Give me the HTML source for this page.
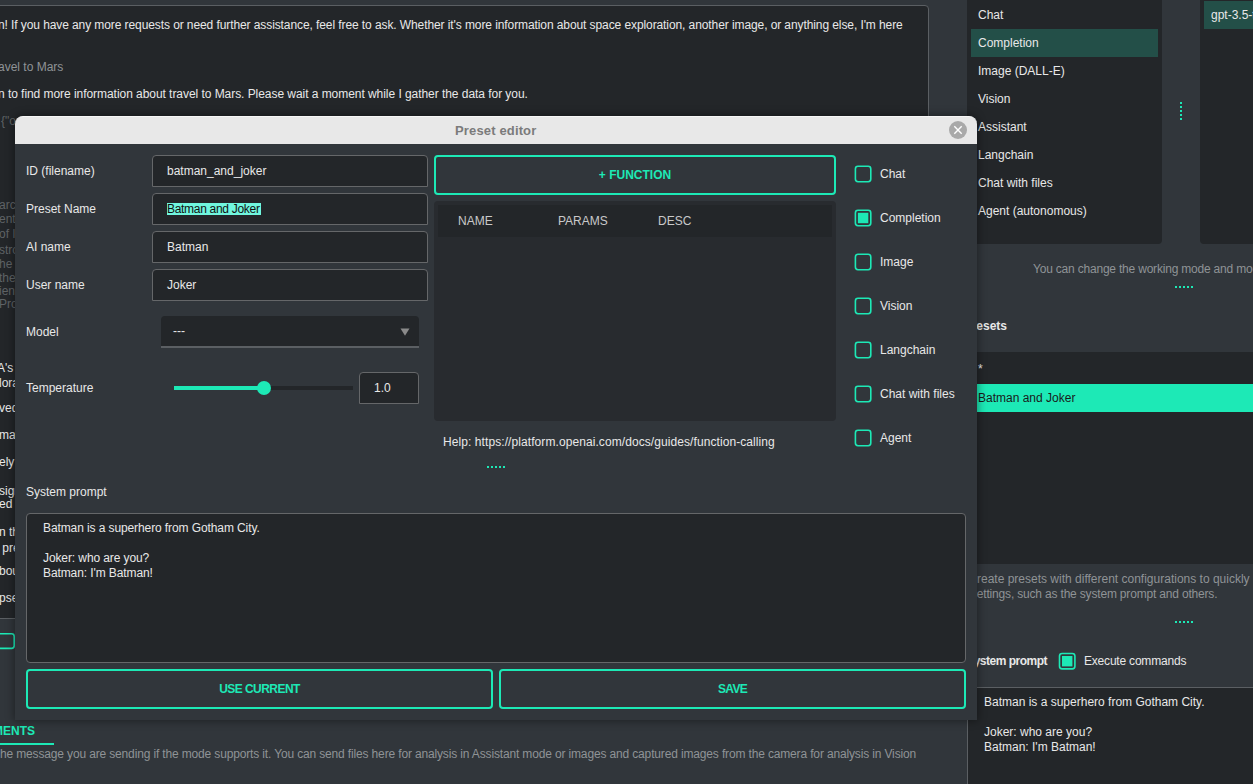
<!DOCTYPE html>
<html><head><meta charset="utf-8">
<style>
*{box-sizing:border-box;margin:0;padding:0}
html,body{width:1253px;height:784px;overflow:hidden;background:#31363b}
body{position:relative;font-family:"Liberation Sans",sans-serif;font-size:12px;color:#e8e8e8}
.a{position:absolute}
.t{position:absolute;white-space:pre;line-height:16px;height:16px}
.g{color:#8f9396}
.dark{background:#232629}
.dotsh{position:absolute;height:2px;background:repeating-linear-gradient(90deg,#1de9b6 0 2px,transparent 2px 4px)}
.dotsv{position:absolute;width:2px;background:repeating-linear-gradient(180deg,#1de9b6 0 2px,transparent 2px 4px)}
.inp{position:absolute;background:#232629;border:1px solid #656769;border-radius:4px 4px 0 0}
.btn{position:absolute;border:2px solid #1de9b6;border-radius:4px;color:#1de9b6;font-weight:bold;text-align:center}
.cb{position:absolute;width:17px;height:17px;border:2px solid #1de9b6;border-radius:3px}
.cb.on::after{content:"";position:absolute;left:2px;top:2px;width:9px;height:9px;background:#1de9b6}
</style></head><body>

<!-- ===== background: chat output ===== -->
<div class="a dark" style="left:-10px;top:5px;width:939px;height:614px;border:1px solid #5b5f63;border-radius:4px"></div>
<div class="t" style="left:-2px;top:17px;letter-spacing:-0.09px">n! If you have any more requests or need further assistance, feel free to ask. Whether it's more information about space exploration, another image, or anything else, I'm here</div>
<div class="t g" style="left:-2px;top:59px">avel to Mars</div>
<div class="t" style="left:-2px;top:86px;letter-spacing:-0.05px">n to find more information about travel to Mars. Please wait a moment while I gather the data for you.</div>
<div class="t" style="left:1px;top:113px;color:#5f6366">{"o</div>

<!-- left strip partial texts -->
<div class="a" style="left:0;top:180px;width:15px;height:440px;overflow:hidden;white-space:pre">
<div class="t" style="left:-1px;top:17px;color:#5f6366">arc</div>
<div class="t" style="left:-1px;top:31px;color:#5f6366">ent</div>
<div class="t" style="left:-1px;top:46px;color:#5f6366">of I</div>
<div class="t" style="left:-1px;top:62px;color:#5f6366">stro</div>
<div class="t" style="left:-1px;top:76px;color:#5f6366">he</div>
<div class="t" style="left:-1px;top:90px;color:#5f6366">the</div>
<div class="t" style="left:-1px;top:103px;color:#5f6366">ien</div>
<div class="t" style="left:-1px;top:116px;color:#5f6366">Pro</div>
<div class="t" style="left:-3px;top:180px">A's I</div>
<div class="t" style="left:-1px;top:195px">lora</div>
<div class="t" style="left:-1px;top:220px">ved</div>
<div class="t" style="left:-1px;top:247px">man</div>
<div class="t" style="left:-1px;top:274px">ely</div>
<div class="t" style="left:-1px;top:303px">sign</div>
<div class="t" style="left:-1px;top:316px">ed</div>
<div class="t" style="left:-1px;top:344px">n th</div>
<div class="t" style="left:-1px;top:360px"> pre</div>
<div class="t" style="left:-1px;top:383px">bou</div>
<div class="t" style="left:-1px;top:410px">pse</div>
</div>
<svg class="a" style="left:0;top:630px" width="20" height="22"><rect x="-10" y="3.8" width="24.2" height="14.6" rx="2.6" fill="none" stroke="#1de9b6" stroke-width="1.6"/></svg>

<!-- attachments tab -->
<div class="t" style="left:-7px;top:723px;color:#1de9b6;font-weight:bold">MENTS</div>
<div class="a" style="left:0;top:743px;width:54px;height:2px;background:#1de9b6"></div>
<div class="t g" style="left:0px;top:746px;letter-spacing:-0.15px">he message you are sending if the mode supports it. You can send files here for analysis in Assistant mode or images and captured images from the camera for analysis in Vision</div>

<!-- ===== right panel ===== -->
<div class="a dark" style="left:967px;top:-6px;width:195px;height:250px;border-radius:4px"></div>
<div class="a" style="left:971px;top:29px;width:187px;height:28px;background:#234f48"></div>
<div class="t" style="left:978px;top:7px">Chat</div>
<div class="t" style="left:978px;top:35px">Completion</div>
<div class="t" style="left:978px;top:63px">Image (DALL-E)</div>
<div class="t" style="left:978px;top:91px">Vision</div>
<div class="t" style="left:978px;top:119px">Assistant</div>
<div class="t" style="left:978px;top:147px">Langchain</div>
<div class="t" style="left:978px;top:175px">Chat with files</div>
<div class="t" style="left:978px;top:203px">Agent (autonomous)</div>
<div class="dotsv" style="left:1180px;top:102px;height:18px"></div>
<div class="a dark" style="left:1200px;top:-6px;width:70px;height:250px;border-radius:4px"></div>
<div class="a" style="left:1204px;top:1px;width:60px;height:28px;background:#234f48"></div>
<div class="t" style="left:1211px;top:7px">gpt-3.5-turbo</div>

<div class="t g" style="left:1033px;top:261px;letter-spacing:-0.2px">You can change the working mode and model</div>
<div class="dotsh" style="left:1175px;top:286px;width:18px"></div>

<div class="t" style="left:907px;top:318px;width:100px;text-align:right;font-weight:bold">Presets</div>
<div class="a dark" style="left:967px;top:352px;width:300px;height:212px"></div>
<div class="t" style="left:978px;top:361px">*</div>
<div class="a" style="left:967px;top:384px;width:300px;height:28px;background:#1de9b6"></div>
<div class="t" style="left:978px;top:390px;color:#1a1a1a">Batman and Joker</div>

<div class="t g" style="left:971px;top:571px">create presets with different configurations to quickly</div>
<div class="t g" style="left:971px;top:586px;letter-spacing:-0.18px">settings, such as the system prompt and others.</div>
<div class="dotsh" style="left:1175px;top:621px;width:18px"></div>

<div class="t" style="left:947px;top:653px;width:100px;text-align:right;font-weight:bold;letter-spacing:-0.5px">System prompt</div>
<svg class="a" style="left:1057px;top:651px" width="20" height="20"><rect x="2.50" y="2.50" width="15.4" height="15.4" rx="2.6" fill="none" stroke="#1de9b6" stroke-width="1.6"/><rect x="5.00" y="5.00" width="10.4" height="10.4" fill="#1de9b6"/></svg>
<div class="t" style="left:1084px;top:653px;letter-spacing:-0.2px">Execute commands</div>

<div class="a dark" style="left:967px;top:687px;width:300px;height:110px;border-top:1px solid #5b5f63;border-left:1px solid #5b5f63"></div>
<div class="t" style="left:984px;top:694px">Batman is a superhero from Gotham City.</div>
<div class="t" style="left:984px;top:724px">Joker: who are you?</div>
<div class="t" style="left:984px;top:739px">Batman: I'm Batman!</div>

<!-- ===== dialog ===== -->
<div class="a" style="left:15px;top:116px;width:962px;height:604px;background:#31363b;border-radius:8px 8px 0 0;box-shadow:0 0 9px 1px rgba(0,0,0,0.4)"></div>
<div class="a" style="left:15px;top:116px;width:962px;height:28px;background:#e8e8e8;border-radius:8px 8px 0 0;border-top:1px solid #f6f6f6"></div>
<div class="t" style="left:455px;top:123px;font-size:13px;font-weight:bold;color:#7b7b7b;letter-spacing:0.15px">Preset editor</div>
<div class="a" style="left:949px;top:121px;width:18px;height:18px;border-radius:50%;background:#a9a9a9"></div>
<svg class="a" style="left:949px;top:121px" width="18" height="18" viewBox="0 0 18 18"><path d="M5.3 5.3L12.7 12.7M12.7 5.3L5.3 12.7" stroke="#fff" stroke-width="1.4"/></svg>

<!-- labels -->
<div class="t" style="left:26px;top:163px">ID (filename)</div>
<div class="t" style="left:26px;top:201px">Preset Name</div>
<div class="t" style="left:26px;top:239px">AI name</div>
<div class="t" style="left:26px;top:277px">User name</div>
<div class="t" style="left:26px;top:324px">Model</div>
<div class="t" style="left:26px;top:380px">Temperature</div>

<div class="inp" style="left:152px;top:155px;width:276px;height:32px"></div>
<div class="t" style="left:167px;top:163px">batman_and_joker</div>
<div class="inp" style="left:152px;top:193px;width:276px;height:32px"></div>
<div class="a" style="left:167px;top:203px;width:94px;height:12px;background:#70f6de"></div>
<div class="t" style="left:167px;top:201px;color:#111;letter-spacing:-0.3px">Batman and Joker</div>
<div class="inp" style="left:152px;top:231px;width:276px;height:32px"></div>
<div class="t" style="left:167px;top:239px">Batman</div>
<div class="inp" style="left:152px;top:269px;width:276px;height:32px"></div>
<div class="t" style="left:167px;top:277px">Joker</div>

<!-- combobox -->
<div class="a" style="left:161px;top:316px;width:258px;height:32px;background:#232629;border-radius:4px 4px 0 0;border-bottom:2px solid #5b5f63"></div>
<div class="t" style="left:173px;top:323px">---</div>
<svg class="a" style="left:400px;top:328px" width="10" height="8" viewBox="0 0 10 8"><path d="M0.5 0.5H9.5L5 7.8Z" fill="#8a8a8a"/></svg>

<!-- slider -->
<div class="a" style="left:174px;top:386px;width:179px;height:4px;background:#232629"></div>
<div class="a" style="left:174px;top:386px;width:90px;height:4px;background:#1de9b6"></div>
<div class="a" style="left:257px;top:381px;width:14px;height:14px;border-radius:50%;background:#1de9b6"></div>
<div class="inp" style="left:359px;top:372px;width:60px;height:32px"></div>
<div class="t" style="left:374px;top:380px">1.0</div>

<!-- function button / table -->
<div class="btn" style="left:434px;top:155px;width:402px;height:40px;line-height:36px">+ FUNCTION</div>
<div class="a" style="left:434px;top:201px;width:402px;height:220px;background:#282b2f;border-radius:4px"></div>
<div class="a" style="left:438px;top:205px;width:394px;height:32px;background:#232629"></div>
<div class="t" style="left:458px;top:213px;color:#c9c9c9">NAME</div>
<div class="t" style="left:558px;top:213px;color:#c9c9c9">PARAMS</div>
<div class="t" style="left:658px;top:213px;color:#c9c9c9">DESC</div>

<div class="t" style="left:443px;top:434px;letter-spacing:0.08px">Help: https://platform.openai.com/docs/guides/function-calling</div>
<div class="dotsh" style="left:487px;top:466px;width:18px"></div>

<!-- checkboxes -->
<svg class="a" style="left:853px;top:164px" width="20" height="20"><rect x="2.40" y="2.30" width="15.4" height="15.4" rx="2.6" fill="none" stroke="#1de9b6" stroke-width="1.6"/></svg><div class="t" style="left:880px;top:166px">Chat</div>
<svg class="a" style="left:853px;top:208px" width="20" height="20"><rect x="2.40" y="2.30" width="15.4" height="15.4" rx="2.6" fill="none" stroke="#1de9b6" stroke-width="1.6"/><rect x="4.90" y="4.80" width="10.4" height="10.4" fill="#1de9b6"/></svg><div class="t" style="left:880px;top:210px">Completion</div>
<svg class="a" style="left:853px;top:252px" width="20" height="20"><rect x="2.40" y="2.30" width="15.4" height="15.4" rx="2.6" fill="none" stroke="#1de9b6" stroke-width="1.6"/></svg><div class="t" style="left:880px;top:254px">Image</div>
<svg class="a" style="left:853px;top:296px" width="20" height="20"><rect x="2.40" y="2.30" width="15.4" height="15.4" rx="2.6" fill="none" stroke="#1de9b6" stroke-width="1.6"/></svg><div class="t" style="left:880px;top:298px">Vision</div>
<svg class="a" style="left:853px;top:340px" width="20" height="20"><rect x="2.40" y="2.30" width="15.4" height="15.4" rx="2.6" fill="none" stroke="#1de9b6" stroke-width="1.6"/></svg><div class="t" style="left:880px;top:342px">Langchain</div>
<svg class="a" style="left:853px;top:384px" width="20" height="20"><rect x="2.40" y="2.30" width="15.4" height="15.4" rx="2.6" fill="none" stroke="#1de9b6" stroke-width="1.6"/></svg><div class="t" style="left:880px;top:386px">Chat with files</div>
<svg class="a" style="left:853px;top:428px" width="20" height="20"><rect x="2.40" y="2.30" width="15.4" height="15.4" rx="2.6" fill="none" stroke="#1de9b6" stroke-width="1.6"/></svg><div class="t" style="left:880px;top:430px">Agent</div>

<!-- system prompt -->
<div class="t" style="left:26px;top:484px">System prompt</div>
<div class="inp" style="left:26px;top:513px;width:940px;height:150px;border-radius:4px"></div>
<div class="t" style="left:43px;top:521px;line-height:15px;letter-spacing:-0.1px">Batman is a superhero from Gotham City.</div>
<div class="t" style="left:43px;top:551px;line-height:15px;letter-spacing:-0.1px">Joker: who are you?</div>
<div class="t" style="left:43px;top:566px;line-height:15px;letter-spacing:-0.1px">Batman: I'm Batman!</div>

<div class="btn" style="left:26px;top:669px;width:467px;height:40px;line-height:36px;letter-spacing:-0.55px">USE CURRENT</div>
<div class="btn" style="left:499px;top:669px;width:467px;height:40px;line-height:36px;letter-spacing:-0.7px">SAVE</div>

</body></html>
